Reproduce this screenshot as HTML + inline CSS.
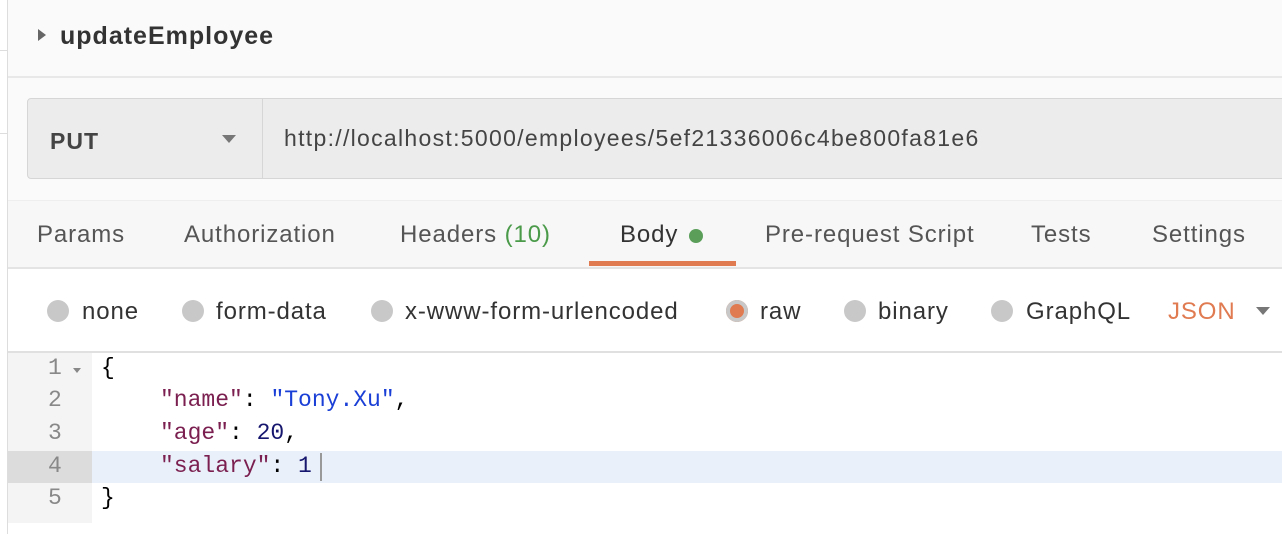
<!DOCTYPE html>
<html><head><style>
body{margin:0;width:1282px;height:534px;overflow:hidden;background:#fafafa;font-family:"Liberation Sans",sans-serif;position:relative}
.a{position:absolute;white-space:nowrap}
.t{font-size:24px;letter-spacing:0.9px;color:#555;top:221px}
.r{font-size:24px;letter-spacing:0.9px;color:#333;top:298px}
.dot{position:absolute;width:22px;height:22px;border-radius:50%;background:#c8c8c8;top:300px}
.code{font-family:"Liberation Mono",monospace;font-size:23px}
.ln{color:#888;left:48px;font-family:"Liberation Mono",monospace;font-size:23px}
</style></head><body>
<div class="a" style="left:0;top:0;width:7px;height:534px;background:#fff;border-right:1px solid #ddd"></div>
<div class="a" style="left:0;top:50px;width:7px;height:1px;background:#ddd"></div>
<div class="a" style="left:0;top:133px;width:7px;height:1px;background:#ddd"></div>
<div class="a" style="left:38px;top:29px;width:0;height:0;border-left:8px solid #666;border-top:6px solid transparent;border-bottom:6px solid transparent"></div>
<div class="a" style="left:60px;top:22px;font-size:25px;letter-spacing:1px;font-weight:bold;color:#333">updateEmployee</div>
<div class="a" style="left:8px;top:76px;width:1274px;height:2px;background:#e8e8e8"></div>
<div class="a" style="left:27px;top:98px;width:1260px;height:79px;background:#ececec;border:1px solid #d6d6d6;border-radius:4px"></div>
<div class="a" style="left:262px;top:99px;width:1px;height:79px;background:#d6d6d6"></div>
<div class="a" style="left:50px;top:128px;font-size:23px;letter-spacing:1px;font-weight:bold;color:#444">PUT</div>
<div class="a" style="left:222px;top:135px;border-top:8px solid #777;border-left:7px solid transparent;border-right:7px solid transparent"></div>
<div class="a" style="left:284px;top:125px;font-size:23px;letter-spacing:1.3px;color:#444">http://localhost:5000/employees/5ef21336006c4be800fa81e6</div>
<div class="a" style="left:8px;top:200px;width:1274px;height:67px;background:#f7f7f7;border-top:1px solid #eee"></div>
<div class="a" style="left:8px;top:267px;width:1274px;height:2px;background:#e4e4e4"></div>
<div class="a" style="left:8px;top:269px;width:1274px;height:82px;background:#fff"></div>
<div class="a t" style="left:37px">Params</div>
<div class="a t" style="left:184px">Authorization</div>
<div class="a t" style="left:400px">Headers <span style="color:#4a9a4a">(10)</span></div>
<div class="a t" style="left:620px;color:#333">Body</div>
<div class="a" style="left:689px;top:229px;width:14px;height:14px;border-radius:50%;background:#5a9e5a"></div>
<div class="a" style="left:589px;top:261px;width:147px;height:5px;background:#e07a50"></div>
<div class="a t" style="left:765px">Pre-request Script</div>
<div class="a t" style="left:1031px">Tests</div>
<div class="a t" style="left:1152px">Settings</div>
<div class="dot" style="left:47px"></div><div class="a r" style="left:82px">none</div>
<div class="dot" style="left:182px"></div><div class="a r" style="left:216px">form-data</div>
<div class="dot" style="left:371px"></div><div class="a r" style="left:405px">x-www-form-urlencoded</div>
<div class="dot" style="left:726px;background:#e07a50;box-shadow:inset 0 0 0 4px #c8c8c8"></div><div class="a r" style="left:760px">raw</div>
<div class="dot" style="left:844px"></div><div class="a r" style="left:878px">binary</div>
<div class="dot" style="left:991px"></div><div class="a r" style="left:1026px">GraphQL</div>
<div class="a r" style="left:1168px;color:#e07a50">JSON</div>
<div class="a" style="left:1256px;top:307px;border-top:8px solid #777;border-left:7px solid transparent;border-right:7px solid transparent"></div>
<div class="a" style="left:8px;top:351px;width:1274px;height:2px;background:#e0e0e0"></div>
<div class="a" style="left:8px;top:353px;width:1274px;height:181px;background:#fff"></div>
<div class="a" style="left:8px;top:353px;width:84px;height:170px;background:#f4f4f4"></div>
<div class="a" style="left:8px;top:451px;width:84px;height:32px;background:#dcdcdc"></div>
<div class="a" style="left:92px;top:451px;width:1190px;height:32px;background:#e9f0fa"></div>
<div class="a ln" style="top:355px">1</div>
<div class="a" style="left:73px;top:368px;border-top:5px solid #888;border-left:4px solid transparent;border-right:4px solid transparent"></div>
<div class="a ln" style="top:387px">2</div>
<div class="a ln" style="top:420px">3</div>
<div class="a ln" style="top:453px">4</div>
<div class="a ln" style="top:485px">5</div>
<div class="a code" style="left:101px;top:355px;color:#000">{</div>
<div class="a code" style="left:160px;top:387px"><span style="color:#7a1f4f">"name"</span>: <span style="color:#1a3fd6">"Tony.Xu"</span>,</div>
<div class="a code" style="left:160px;top:420px"><span style="color:#7a1f4f">"age"</span>: <span style="color:#16166e">20</span>,</div>
<div class="a code" style="left:160px;top:453px"><span style="color:#7a1f4f">"salary"</span>: <span style="color:#16166e">1</span></div>
<div class="a" style="left:320px;top:453px;width:2px;height:28px;background:#999"></div>
<div class="a code" style="left:101px;top:485px;color:#000">}</div>
</body></html>
